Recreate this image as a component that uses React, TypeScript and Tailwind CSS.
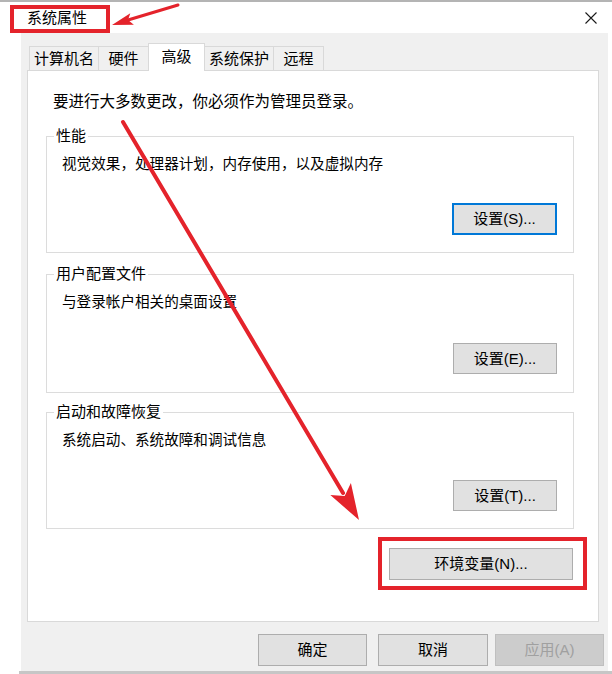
import React from 'react';

const FONT = "font-['Liberation_Sans','Noto_Sans_CJK_SC',sans-serif]";

const Btn: React.FC<{ label: string; className?: string; focused?: boolean; disabled?: boolean }> = ({
    label,
    className = '',
    focused,
    disabled,
}) => (
    <div
        className={`flex items-center justify-center leading-[20px] ${
            disabled
                ? 'bg-[#cccccc] border border-[#bfbfbf] text-[#a0a0a0]'
                : focused
                ? 'bg-[#e1e1e1] border-2 border-[#0078d7] text-black'
                : 'bg-[#e1e1e1] border border-[#adadad] text-black'
        } ${className}`}
    >
        {label}
    </div>
);

// 分组框：标签压在边框上
const Group: React.FC<{ title: string; desc: string; btn: string; h: string; mt: string; btnMt: string; focused?: boolean }> = ({
    title,
    desc,
    btn,
    h,
    mt,
    btnMt,
    focused,
}) => (
    <div className={`relative border border-[#dcdcdc] ${h} ${mt}`}>
        <span className="absolute -top-[11px] left-[7px] bg-white px-[2px] leading-[20px]">{title}</span>
        <div className="pl-[15px] pt-[17px] leading-[20px] text-[14.6px]">{desc}</div>
        <div className={`flex justify-end pr-[16px] ${btnMt}`}>
            <Btn label={btn} focused={focused} className={focused ? 'w-[105px] h-[32px]' : 'w-[104px] h-[31px]'} />
        </div>
    </div>
);

const tabs = [
    { name: '计算机名', w: 'w-[70px]' },
    { name: '硬件', w: 'w-[51px]' },
    { name: '高级', w: 'w-[57px]', active: true },
    { name: '系统保护', w: 'w-[70px]' },
    { name: '远程', w: 'w-[51px]' },
];

export default function App() {
    return (
        <div className={`relative w-[612px] h-[674px] bg-white flex flex-col text-[15px] text-black ${FONT}`}>
            <div className="h-[2px] bg-[#b4b4b4] shrink-0" />

            {/* 标题栏 */}
            <div className="h-[31px] shrink-0 flex items-center justify-between pl-[27px] pr-[15px]">
                <span className="leading-[20px]">系统属性</span>
                <svg width="12" height="12" viewBox="0 0 12 12">
                    <path d="M0.5 0.5 L11.5 11.5 M11.5 0.5 L0.5 11.5" stroke="#1a1a1a" strokeWidth="1.1" fill="none" />
                </svg>
            </div>

            <div className="flex flex-1">
                <div className="w-[21px] shrink-0" />
                <div className="flex-1 bg-[#f0f0f0] flex flex-col pt-[10px] pl-[6px] pr-[9px]">
                    {/* 选项卡 */}
                    <div className="flex items-end h-[28px] -mb-px pl-[2px]">
                        {tabs.map((t, i) =>
                            t.active ? (
                                <div
                                    key={t.name}
                                    className={`${t.w} h-[28px] -ml-px relative z-10 bg-white border border-b-0 border-[#d9d9d9] flex items-center justify-center leading-[20px] pb-[2px]`}
                                >
                                    {t.name}
                                </div>
                            ) : (
                                <div
                                    key={t.name}
                                    className={`${t.w} h-[25px] ${i > 0 ? '-ml-px' : ''} bg-[#f0f0f0] border border-b-0 border-[#d9d9d9] flex items-center justify-center leading-[20px]`}
                                >
                                    {t.name}
                                </div>
                            )
                        )}
                    </div>

                    {/* 选项卡内容 */}
                    <div className="h-[552px] shrink-0 bg-white border border-[#d9d9d9] pt-[21px] pl-[18px] pr-[24px] flex flex-col">
                        <div className="leading-[20px] ml-[7px] text-[15.5px]">要进行大多数更改，你必须作为管理员登录。</div>
                        <Group
                            title="性能"
                            desc="视觉效果，处理器计划，内存使用，以及虚拟内存"
                            btn="设置(S)..."
                            h="h-[117px]"
                            mt="mt-[24px]"
                            btnMt="mt-[29px]"
                            focused
                        />
                        <Group
                            title="用户配置文件"
                            desc="与登录帐户相关的桌面设置"
                            btn="设置(E)..."
                            h="h-[119px]"
                            mt="mt-[21px]"
                            btnMt="mt-[31px]"
                        />
                        <Group
                            title="启动和故障恢复"
                            desc="系统启动、系统故障和调试信息"
                            btn="设置(T)..."
                            h="h-[117px]"
                            mt="mt-[19px]"
                            btnMt="mt-[30px]"
                        />
                        <div className="flex justify-end mt-[19px] pr-[1px]">
                            <Btn label="环境变量(N)..." className="w-[184px] h-[32px]" />
                        </div>
                    </div>

                    {/* 底部按钮 */}
                    <div className="flex justify-end mt-[12px] -mr-[5px]">
                        <Btn label="确定" className="w-[109px] h-[32px]" />
                        <Btn label="取消" className="w-[110px] h-[32px] ml-[11px]" />
                        <Btn label="应用(A)" className="w-[109px] h-[32px] ml-[7px]" disabled />
                    </div>
                </div>
                <div className="w-[4px] shrink-0" />
            </div>
            <div className="h-[3px] shrink-0 ml-[19px] bg-[#c6c6c6]" />

            {/* 红色标注 */}
            <div className="absolute left-[10px] top-[5px] w-[100px] h-[28px] border-[4px] border-[#e4232b]" />
            <div className="absolute left-[378px] top-[537px] w-[209px] h-[53px] border-[4px] border-[#e4232b]" />
            <svg className="absolute inset-0 pointer-events-none" width="612" height="674" viewBox="0 0 612 674">
                <line x1="178" y1="5" x2="128" y2="20" stroke="#e4232b" strokeWidth="3" strokeLinecap="round" />
                <polygon points="112,25 130.3,13.3 128,20 133.9,24.8" fill="#e4232b" />
                <line x1="123" y1="122" x2="343" y2="493" stroke="#e4232b" strokeWidth="4" strokeLinecap="round" />
                <polygon points="359,520 330.3,495.1 344.7,495.9 350.9,482.9" fill="#e4232b" />
            </svg>
        </div>
    );
}
